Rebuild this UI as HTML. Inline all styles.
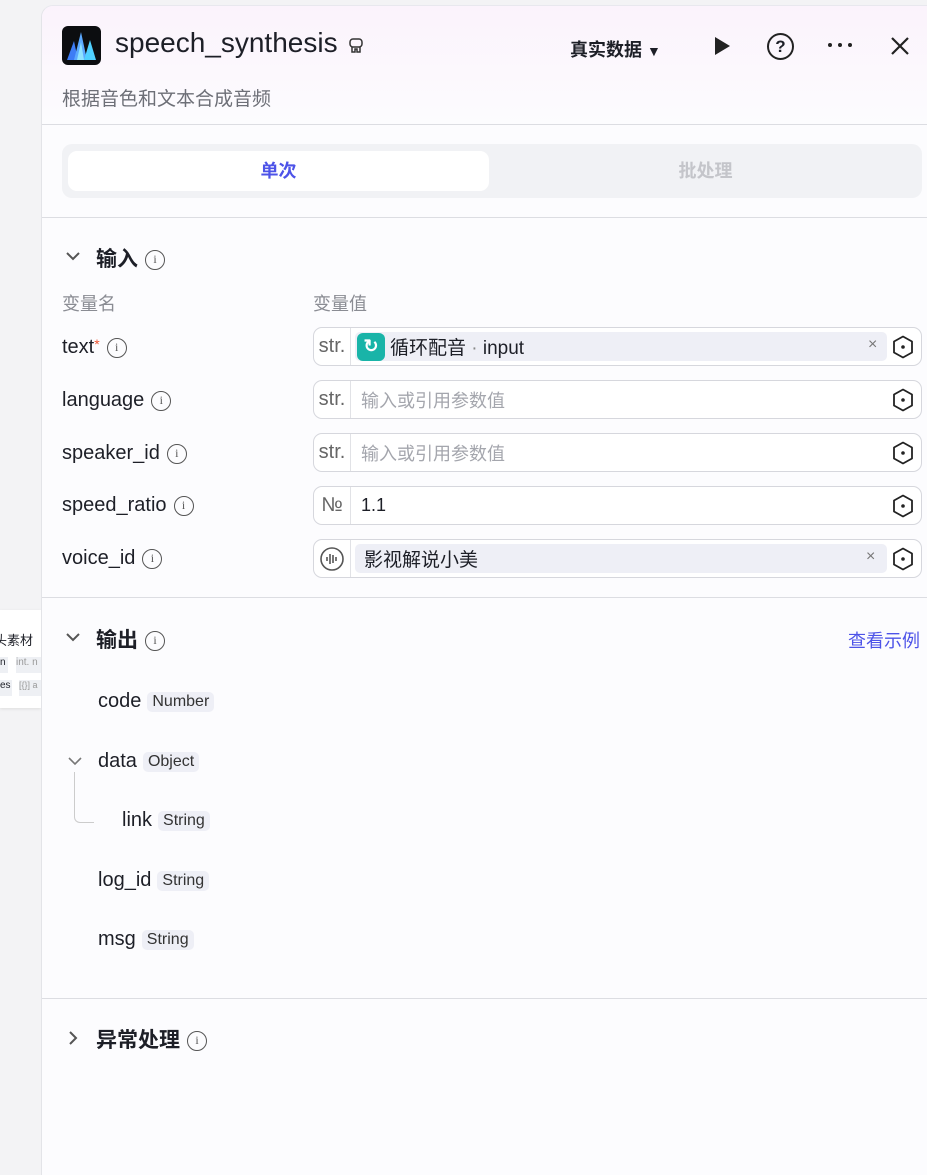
<!DOCTYPE html>
<html><head><meta charset="utf-8"><style>
*{box-sizing:border-box;margin:0;padding:0}
body{width:927px;height:1165px;background:#f3f3f5;font-family:"Liberation Sans","Noto Sans CJK SC",sans-serif;position:relative;overflow:hidden;color:#1d1f27}
.abs{position:absolute}
.panel{position:absolute;left:41px;top:5px;width:900px;height:1170px;background:#fcfcfe;border-left:1px solid #e3e4e8;border-top:1px solid #e8e8ee;border-radius:12px 0 0 0;overflow:hidden}
.hdr{position:absolute;left:0;top:0;width:900px;height:120px;background:linear-gradient(#fbf3fc,#fcfcfe)}
.hr{position:absolute;left:0;width:900px;height:1px;background:#dcdde2}
.lbl{position:absolute;font-size:20px;color:#1d1f27;white-space:nowrap}
.info{display:inline-block;width:20px;height:20px;border:1.6px solid #555;border-radius:50%;font-size:12px;line-height:17px;text-align:center;color:#555;vertical-align:middle;margin-left:7px;font-family:"Liberation Serif",serif;font-weight:normal}
.box{position:absolute;left:271px;width:609px;height:39px;border:1px solid #d6d7dd;border-radius:9px;background:#fff}
.pre{position:absolute;left:0;top:0;width:37px;height:37px;border-right:1px solid #e1e2e6;font-size:20px;color:#666;text-align:center;line-height:36px;font-family:"Liberation Sans Narrow","Liberation Sans",sans-serif}
.ph{position:absolute;left:47px;top:6px;font-size:18px;color:#a4a6ad}
.hex{position:absolute;right:7px;top:7px}
.tag{display:inline-block;background:#eeeff6;border-radius:5px;font-size:16px;padding:1px 5px;color:#333;vertical-align:middle;margin-left:6px}
.chip{position:absolute;left:41px;top:4px;width:532px;height:29px;background:#eeeff6;border-radius:5px}
.sec{font-weight:600;font-size:21px}
</style></head><body>
<div class="abs" style="left:0;top:610px;width:41px;height:98px;background:#fff;box-shadow:0 1px 3px #ddd">
<div class="abs" style="top:20px;font-size:13px;white-space:nowrap;left:-6px">头素材</div>
<div class="abs" style="left:0;top:47px;width:8px;height:16px;background:#eef0f4;font-size:10px">n</div>
<div class="abs" style="left:16px;top:47px;width:30px;height:16px;background:#eef0f4;font-size:10px;color:#999;white-space:nowrap">int. n</div>
<div class="abs" style="left:0;top:70px;width:12px;height:16px;background:#eef0f4;font-size:10px">es</div>
<div class="abs" style="left:19px;top:70px;width:30px;height:16px;background:#eef0f4;font-size:9px;color:#999">[{}] a</div>
</div>
<div class="panel">
<div class="hdr"></div>
<svg class="abs" style="left:20px;top:20px" width="39" height="39" viewBox="0 0 39 39"><rect width="39" height="39" rx="6" fill="#0c0d10"/><path d="M5 34 L12 15 L16 34Z" fill="#3d7cf5"/><path d="M12 34 L19 6 L25 34Z" fill="#5aa8ff"/><path d="M22 34 L28 14 L34 34Z" fill="#4fd0ff"/><path d="M15 34 L19 16 L22 34Z" fill="#8fe3ff"/></svg>
<div class="abs" style="left:73px;top:21px;font-size:28px;color:#1d1f27">speech_synthesis</div>
<svg class="abs" style="left:306px;top:31px" width="16" height="18" viewBox="0 0 16 18"><rect x="2" y="2" width="12" height="8" rx="3" stroke="#333" stroke-width="1.5" fill="none"/><path d="M4 10v5h3v-3h2v3h3v-5" stroke="#333" stroke-width="1.5" fill="none"/></svg>
<div class="abs" style="left:528px;top:30px;font-size:18px;font-weight:bold">真实数据 <span style="font-size:14px">▼</span></div>
<svg class="abs" style="left:670px;top:30px" width="20" height="20"><path d="M3 1 L18 10 L3 19Z" fill="#222"/></svg>
<div class="abs" style="left:725px;top:27px;width:27px;height:27px;border:2.2px solid #222;border-radius:50%;text-align:center;font-size:17px;line-height:23px;font-weight:bold">?</div>
<svg class="abs" style="left:785px;top:36px" width="28" height="6"><circle cx="3" cy="3" r="2" fill="#222"/><circle cx="13" cy="3" r="2" fill="#222"/><circle cx="23" cy="3" r="2" fill="#222"/></svg>
<svg class="abs" style="left:848px;top:30px" width="20" height="20"><path d="M2 2 L18 18 M18 2 L2 18" stroke="#222" stroke-width="2.2"/></svg>
<div class="abs" style="left:20px;top:78px;font-size:19px;color:#6d6f77">根据音色和文本合成音频</div>
<div class="hr" style="top:118px"></div>
<div class="abs" style="left:20px;top:138px;width:860px;height:54px;background:#f1f2f5;border-radius:10px"></div>
<div class="abs" style="left:26px;top:145px;width:421px;height:40px;background:#fff;border-radius:9px;text-align:center;line-height:40px;font-size:18px;font-weight:bold;color:#4d53e8">单次</div>
<div class="abs" style="left:447px;top:145px;width:433px;height:40px;text-align:center;line-height:40px;font-size:18px;font-weight:bold;color:#c4c5ca">批处理</div>
<div class="hr" style="top:211px"></div>
<svg class="abs" style="left:23px;top:244px" width="16" height="12"><path d="M2 3 L8 9 L14 3" stroke="#555" stroke-width="2" fill="none"/></svg>
<div class="lbl sec" style="left:54px;top:237px">输入<span class="info">i</span></div>
<div class="abs" style="left:20px;top:284px;font-size:18px;color:#8a8c93">变量名</div>
<div class="abs" style="left:271px;top:284px;font-size:18px;color:#8a8c93">变量值</div>
<div class="lbl" style="left:20px;top:330px">text<span style="color:#e53;font-size:14px;vertical-align:top">*</span><span class="info">i</span></div>
<div class="lbl" style="left:20px;top:383px">language<span class="info">i</span></div>
<div class="lbl" style="left:20px;top:436px">speaker_id<span class="info">i</span></div>
<div class="lbl" style="left:20px;top:488px">speed_ratio<span class="info">i</span></div>
<div class="lbl" style="left:20px;top:541px">voice_id<span class="info">i</span></div>
<div class="box" style="top:321px"><div class="pre">str.</div><div class="chip"></div>
<div class="abs" style="left:43px;top:5px;width:28px;height:28px;background:#19b4a8;border-radius:6px;color:#fff;text-align:center;line-height:27px;font-size:18px;font-weight:bold">↻</div>
<div class="abs" style="left:76px;top:5px;font-size:19px;white-space:nowrap">循环配音 <span style="color:#888">·</span> input</div>
<div class="abs" style="left:554px;top:8px;font-size:16px;color:#777">×</div>
<svg class="hex" width="22" height="24" viewBox="0 0 22 24"><path d="M11 1.5 L20 6.5 V17.5 L11 22.5 L2 17.5 V6.5Z" stroke="#222" stroke-width="1.8" fill="none" stroke-linejoin="round"/><circle cx="11" cy="12" r="1.8" fill="#222"/></svg></div>
<div class="box" style="top:374px"><div class="pre">str.</div><div class="ph">输入或引用参数值</div><svg class="hex" width="22" height="24" viewBox="0 0 22 24"><path d="M11 1.5 L20 6.5 V17.5 L11 22.5 L2 17.5 V6.5Z" stroke="#222" stroke-width="1.8" fill="none" stroke-linejoin="round"/><circle cx="11" cy="12" r="1.8" fill="#222"/></svg></div>
<div class="box" style="top:427px"><div class="pre">str.</div><div class="ph">输入或引用参数值</div><svg class="hex" width="22" height="24" viewBox="0 0 22 24"><path d="M11 1.5 L20 6.5 V17.5 L11 22.5 L2 17.5 V6.5Z" stroke="#222" stroke-width="1.8" fill="none" stroke-linejoin="round"/><circle cx="11" cy="12" r="1.8" fill="#222"/></svg></div>
<div class="box" style="top:480px"><div class="pre">№</div><div class="ph" style="color:#1d1f27;top:8px">1.1</div><svg class="hex" width="22" height="24" viewBox="0 0 22 24"><path d="M11 1.5 L20 6.5 V17.5 L11 22.5 L2 17.5 V6.5Z" stroke="#222" stroke-width="1.8" fill="none" stroke-linejoin="round"/><circle cx="11" cy="12" r="1.8" fill="#222"/></svg></div>
<div class="box" style="top:533px"><div class="pre"><svg width="26" height="26" viewBox="0 0 26 26" style="margin-top:6px"><circle cx="13" cy="13" r="11" stroke="#555" stroke-width="1.6" fill="none"/><path d="M8 11v4M11 8v10M14 9v8M17 11v4" stroke="#555" stroke-width="1.6"/></svg></div><div class="chip"></div>
<div class="abs" style="left:50px;top:5px;font-size:19px">影视解说小美</div>
<div class="abs" style="left:552px;top:8px;font-size:16px;color:#777">×</div>
<svg class="hex" width="22" height="24" viewBox="0 0 22 24"><path d="M11 1.5 L20 6.5 V17.5 L11 22.5 L2 17.5 V6.5Z" stroke="#222" stroke-width="1.8" fill="none" stroke-linejoin="round"/><circle cx="11" cy="12" r="1.8" fill="#222"/></svg></div>
<div class="hr" style="top:591px"></div>
<svg class="abs" style="left:23px;top:625px" width="16" height="12"><path d="M2 3 L8 9 L14 3" stroke="#555" stroke-width="2" fill="none"/></svg>
<div class="lbl sec" style="left:54px;top:618px">输出<span class="info">i</span></div>
<div class="abs" style="left:806px;top:621px;font-size:18px;color:#4d53e8;white-space:nowrap">查看示例</div>
<div class="lbl" style="left:56px;top:684px">code<span class="tag">Number</span></div>
<svg class="abs" style="left:25px;top:749px" width="16" height="12"><path d="M2 3 L8 9 L14 3" stroke="#777" stroke-width="1.6" fill="none"/></svg>
<div class="abs" style="left:32px;top:766px;width:20px;height:51px;border-left:1px solid #ccc;border-bottom:1px solid #ccc;border-radius:0 0 0 6px"></div>
<div class="lbl" style="left:56px;top:744px">data<span class="tag">Object</span></div>
<div class="lbl" style="left:80px;top:803px">link<span class="tag">String</span></div>
<div class="lbl" style="left:56px;top:863px">log_id<span class="tag">String</span></div>
<div class="lbl" style="left:56px;top:922px">msg<span class="tag">String</span></div>
<div class="hr" style="top:992px"></div>
<svg class="abs" style="left:25px;top:1024px" width="12" height="16"><path d="M3 2 L9 8 L3 14" stroke="#555" stroke-width="2" fill="none"/></svg>
<div class="lbl sec" style="left:54px;top:1018px">异常处理<span class="info">i</span></div>
</div>
</body></html>
